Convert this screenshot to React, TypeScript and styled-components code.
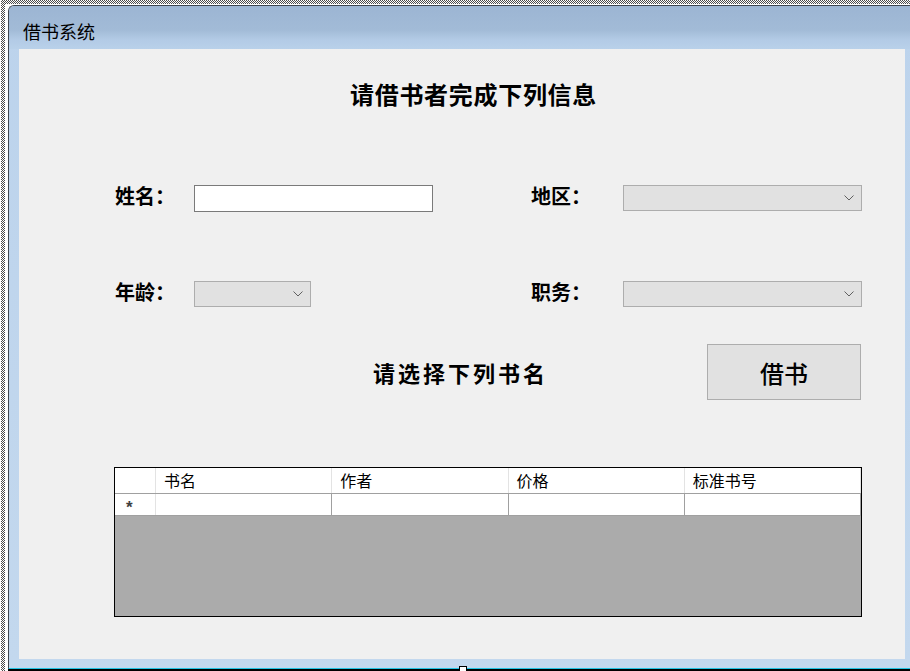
import React from "react";
import styled, { createGlobalStyle } from "styled-components";

const GlobalStyle = createGlobalStyle`
  html, body { margin: 0; padding: 0; background: #ffffff; }
  body { font-family: "Noto Sans CJK SC", "Noto Sans", sans-serif; }
  * { box-sizing: border-box; }
`;

const Surface = styled.div`
  width: 910px;
  height: 671px;
  overflow: hidden;
  background: #ffffff;
  padding-left: 1px;
  position: relative;
`;

const SelectionFrame = styled.div`
  padding: 4px 0 0 4px;
  background-color: #ffffff;
  background-image: repeating-conic-gradient(#4a4a4a 0 25%, #ffffff 0 50%);
  background-size: 2px 2px;
`;

const Canvas = styled.div`
  background: #ffffff;
  padding: 1px 0 0 3px;
`;

const WindowShell = styled.div`
  border-bottom: 2px solid #000000;
  width: 910px;
`;

const Window = styled.div`
  width: 902px;
  display: flex;
  flex-direction: column;
  border-top: 1px solid #3f4650;
  border-left: 1px solid #3f4650;
  border-bottom: 1px solid #22c3e3;
  border-top-left-radius: 6px;
  background: linear-gradient(#bcd3ec, #c3d8ee);
  overflow: hidden;
`;

const TitleBar = styled.div`
  height: 43px;
  padding: 16px 0 0 14px;
  background: linear-gradient(
    #9cb5d3 0px,
    #a2bbd7 24px,
    #b3cbe6 34px,
    #b9d1ea 43px
  );
  font-size: 18px;
  line-height: 18px;
  color: #000000;
`;

const FrameBody = styled.div`
  padding: 0 5px 9px 10px;
`;

const ClientArea = styled.div`
  width: 886px;
  height: 610px;
  background: #f0f0f0;
  display: flex;
  flex-direction: column;
`;

const Heading = styled.h1`
  margin: 0;
  padding: 33px 0 0 331px;
  font-size: 24px;
  line-height: 24px;
  font-weight: 700;
  letter-spacing: 0.7px;
  color: #000000;
`;

const FormGrid = styled.div`
  margin-top: 79px;
  padding-left: 96px;
  display: grid;
  grid-template-columns: 79px 239px 98px 92px 239px;
  row-gap: 69px;
  align-items: start;
`;

const Label = styled.label`
  font-size: 20px;
  line-height: 20px;
  font-weight: 700;
  color: #000000;
  margin-top: 1px;
  white-space: nowrap;
`;

const TextBox = styled.div`
  width: 239px;
  height: 27px;
  background: #ffffff;
  border: 1px solid #7a7a7a;
`;

const Combo = styled.div<{ $w: number }>`
  width: ${(p) => p.$w}px;
  height: 26px;
  background: #e1e1e1;
  border: 1px solid #adadad;
  display: flex;
  align-items: center;
  justify-content: flex-end;
  padding-right: 7px;
`;

const Spacer = styled.div``;

const BookRow = styled.div`
  margin-top: 37px;
  padding: 0 44px 0 354px;
  display: flex;
  align-items: center;
  justify-content: space-between;
`;

const SubHeading = styled.div`
  font-size: 22px;
  line-height: 22px;
  font-weight: 700;
  letter-spacing: 3px;
  color: #000000;
`;

const BorrowButton = styled.button`
  width: 154px;
  height: 56px;
  background: #e1e1e1;
  border: 1px solid #adadad;
  font-family: "Noto Sans CJK SC", sans-serif;
  font-size: 24px;
  font-weight: 500;
  color: #000000;
  padding: 0;
`;

const Table = styled.div`
  margin: 67px 0 0 95px;
  width: 748px;
  height: 150px;
  border: 1px solid #000000;
  background: #ababab;
  display: flex;
  flex-direction: column;
`;

const TableRow = styled.div<{ $h: number }>`
  display: grid;
  grid-template-columns: 41px repeat(4, 1fr);
  height: ${(p) => p.$h}px;
  background: #ffffff;
  border-bottom: 1px solid #a0a0a0;
`;

const Cell = styled.div<{ $header?: boolean; $rowHead?: boolean }>`
  border-right: 1px solid
    ${(p) => (p.$header || p.$rowHead ? "#e3e3e3" : "#a0a0a0")};
  padding-left: ${(p) => (p.$rowHead ? 11 : 8)}px;
  font-size: 16px;
  line-height: ${(p) => (p.$header ? 25 : 20)}px;
  color: ${(p) => (p.$rowHead ? "#404040" : "#000000")};
  font-weight: ${(p) => (p.$rowHead ? 700 : 400)};
  white-space: nowrap;
`;

const Star = styled.span`
  display: block;
  margin-top: 7px;
  font-family: "Liberation Sans", sans-serif;
  font-size: 17px;
  line-height: 14px;
`;

const Grip = styled.div`
  position: absolute;
  left: 459px;
  top: 666px;
  width: 8px;
  height: 6px;
  background: #ffffff;
  border: 1px solid #000000;
`;

const Chevron = () => (
  <svg width="10" height="6" viewBox="0 0 10 6">
    <polyline points="0.5,0.5 5,5 9.5,0.5" fill="none" stroke="#606060" strokeWidth="1" />
  </svg>
);

const columns = ["书名", "作者", "价格", "标准书号"];

export default function App() {
  return (
    <Surface>
      <GlobalStyle />
      <SelectionFrame>
        <Canvas>
          <WindowShell>
            <Window>
              <TitleBar>借书系统</TitleBar>
              <FrameBody>
                <ClientArea>
                  <Heading>请借书者完成下列信息</Heading>
                  <FormGrid>
                    <Label>姓名：</Label>
                    <TextBox />
                    <Spacer />
                    <Label>地区：</Label>
                    <Combo $w={239}>
                      <Chevron />
                    </Combo>
                    <Label>年龄：</Label>
                    <Combo $w={117}>
                      <Chevron />
                    </Combo>
                    <Spacer />
                    <Label>职务：</Label>
                    <Combo $w={239}>
                      <Chevron />
                    </Combo>
                  </FormGrid>
                  <BookRow>
                    <SubHeading>请选择下列书名</SubHeading>
                    <BorrowButton>借书</BorrowButton>
                  </BookRow>
                  <Table>
                    <TableRow $h={26}>
                      <Cell $header />
                      {columns.map((c) => (
                        <Cell key={c} $header>
                          {c}
                        </Cell>
                      ))}
                    </TableRow>
                    <TableRow $h={22}>
                      <Cell $rowHead>
                        <Star>*</Star>
                      </Cell>
                      {columns.map((c) => (
                        <Cell key={c} />
                      ))}
                    </TableRow>
                  </Table>
                </ClientArea>
              </FrameBody>
            </Window>
          </WindowShell>
        </Canvas>
      </SelectionFrame>
      <Grip />
    </Surface>
  );
}
